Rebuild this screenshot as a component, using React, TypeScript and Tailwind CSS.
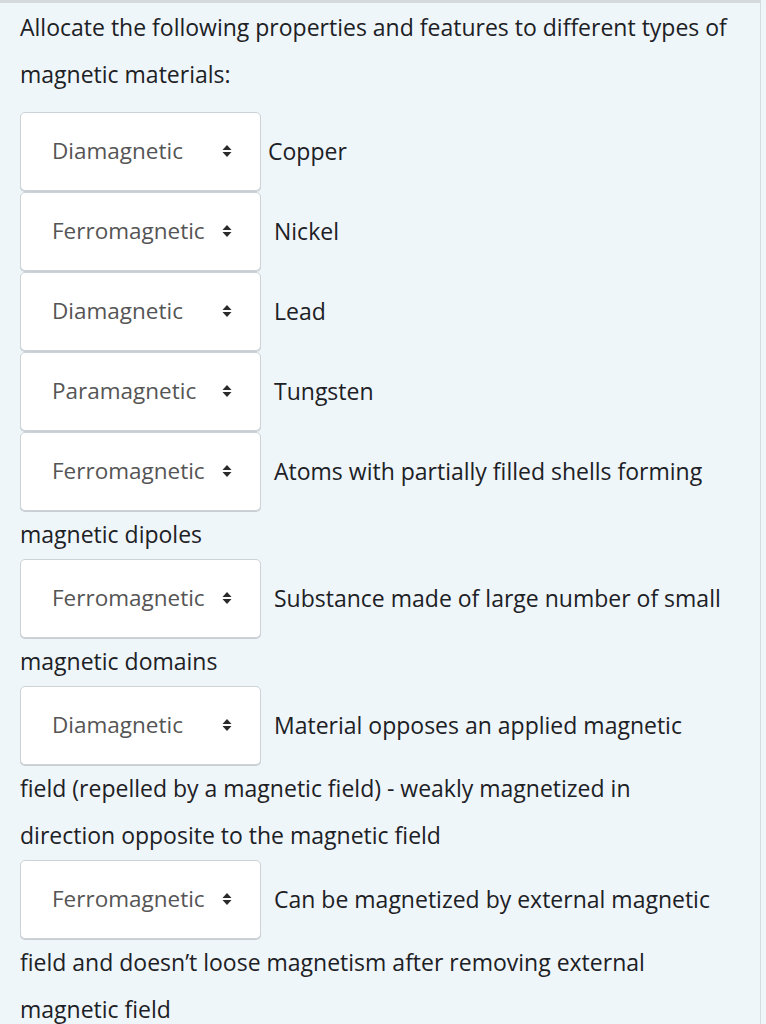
const Chevron = () => (
  <svg width="10" height="14" viewBox="0 0 10 14" className="shrink-0">
    <path d="M0.5 6 L5 1 L9.5 6 Z" fill="#2a2a2a" />
    <path d="M0.5 8 L5 13 L9.5 8 Z" fill="#2a2a2a" />
  </svg>
);

const Select = ({ value }: { value: string }) => (
  <div className="flex h-[79px] w-[241px] shrink-0 items-center justify-between rounded-[5px] border border-[#cdd2d6] bg-white pl-[31px] pr-[28px] text-[22.5px] text-[#555] shadow-[0_1px_0_#c9ced2]">
    <span>{value}</span>
    <Chevron />
  </div>
);

type Item = { value: string; first: string; rest?: string[]; gap?: string };

const items: Item[] = [
  { value: 'Diamagnetic', first: 'Copper', gap: 'ml-[7px]' },
  { value: 'Ferromagnetic', first: 'Nickel' },
  { value: 'Diamagnetic', first: 'Lead' },
  { value: 'Paramagnetic', first: 'Tungsten' },
  { value: 'Ferromagnetic', first: 'Atoms with partially filled shells forming', rest: ['magnetic dipoles'] },
  { value: 'Ferromagnetic', first: 'Substance made of large number of small', rest: ['magnetic domains'] },
  {
    value: 'Diamagnetic',
    first: 'Material opposes an applied magnetic',
    rest: ['field (repelled by a magnetic field) - weakly magnetized in', 'direction opposite to the magnetic field'],
  },
  {
    value: 'Ferromagnetic',
    first: 'Can be magnetized by external magnetic',
    rest: ['field and doesn\u2019t loose magnetism after removing external', 'magnetic field'],
  },
];

export default function App() {
  return (
    <div className="min-h-screen w-[766px] overflow-hidden bg-[#eef6fa] font-['Open_Sans',sans-serif] text-[23px] text-[#1d2125]">
      <div className="h-[1024px] border-t-[3px] border-r border-t-[#d4d9dc] border-r-[#d3dde2] w-[761px] pl-[20px]">
        <p className="leading-[47px] pt-[1px]">
          <span className="block whitespace-nowrap">Allocate the following properties and features to different types of</span>
          <span className="block whitespace-nowrap">magnetic materials:</span>
        </p>
        <div className="mt-[13px]">
          {items.map((it, i) => (
            <div key={i}>
              <div className="flex h-[80px] items-center">
                <Select value={it.value} />
                <span className={`whitespace-nowrap ${it.gap ?? 'ml-[13px]'}`}>{it.first}</span>
              </div>
              {it.rest?.map((r, j) => (
                <div key={j} className="whitespace-nowrap leading-[47px]">
                  {r}
                </div>
              ))}
            </div>
          ))}
        </div>
      </div>
    </div>
  );
}
